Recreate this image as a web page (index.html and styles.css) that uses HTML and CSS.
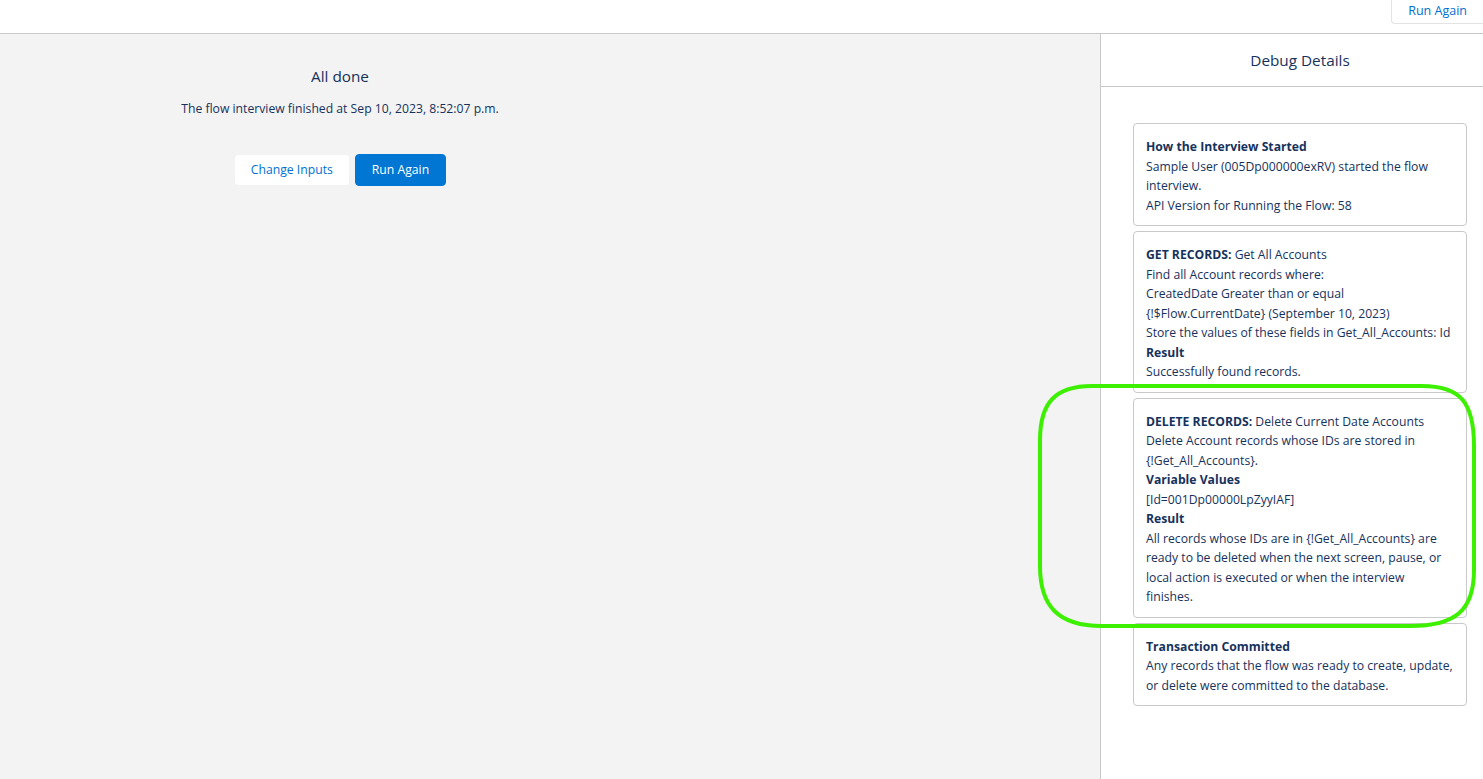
FILE: index.html
```html
<!DOCTYPE html>
<html lang="en">
<head>
<meta charset="utf-8">
<title>Flow Debug</title>
<link rel="stylesheet" href="styles.css">
</head>
<body>
<header class="topbar">
  <button class="top-run">Run Again</button>
</header>
<div class="workspace">
  <main class="main">
    <section class="finish">
      <h1 class="finish-title">All done</h1>
      <p class="finish-text">The flow interview finished at Sep 10, 2023, 8:52:07 p.m.</p>
      <div class="actions">
        <button class="btn btn-neutral">Change Inputs</button>
        <button class="btn btn-brand">Run Again</button>
      </div>
    </section>
  </main>
  <aside class="debug">
    <h2 class="debug-title">Debug Details</h2>
    <div class="debug-list">
      <div class="card">
        <div><b>How the Interview Started</b></div>
        <div>Sample User (005Dp000000exRV) started the flow interview.</div>
        <div>API Version for Running the Flow: 58</div>
      </div>
      <div class="card">
        <div><b>GET RECORDS:</b> Get All Accounts</div>
        <div>Find all Account records where:</div>
        <div>CreatedDate Greater than or equal</div>
        <div>{!$Flow.CurrentDate} (September 10, 2023)</div>
        <div>Store the values of these fields in Get_All_Accounts: Id</div>
        <div><b>Result</b></div>
        <div>Successfully found records.</div>
      </div>
      <div class="card">
        <div><b>DELETE RECORDS:</b> Delete Current Date Accounts</div>
        <div>Delete Account records whose IDs are stored in {!Get_All_Accounts}.</div>
        <div><b>Variable Values</b></div>
        <div>[Id=001Dp00000LpZyyIAF]</div>
        <div><b>Result</b></div>
        <div>All records whose IDs are in {!Get_All_Accounts} are ready to be deleted when the next screen, pause, or local action is executed or when the interview finishes.</div>
      </div>
      <div class="card">
        <div><b>Transaction Committed</b></div>
        <div>Any records that the flow was ready to create, update, or delete were committed to the database.</div>
      </div>
    </div>
  </aside>
</div>
<svg class="mark" width="1483" height="779" viewBox="0 0 1483 779" aria-hidden="true">
  <path d="M1092 386 L1422 386 C1460 386 1474 402 1474 446 L1474 570 C1474 610 1456 626 1410 626 L1102 626 C1058 626 1040 606 1040 566 L1040 440 C1040 402 1056 386 1092 386 Z" fill="none" stroke="#3cf000" stroke-width="4"/>
</svg>
</body>
</html>
```

FILE: styles.css
```css
* { box-sizing: border-box; }

html, body {
  margin: 0;
  height: 100%;
}

body {
  font-family: "Open Sans", "Noto Sans", sans-serif;
  font-size: 12.2px;
  line-height: 1.5;
  color: #16325c;
  background: #ffffff;
  overflow: hidden;
  position: relative;
}

button {
  font-family: inherit;
  cursor: pointer;
}

.topbar {
  height: 34px;
  border-bottom: 1px solid #c9c9c9;
  display: flex;
  justify-content: flex-end;
  align-items: flex-start;
}

/* toolbar button, its top edge tucked under the window edge */
.top-run {
  margin-top: -8px;
  height: 32px;
  padding: 6px 16px 0 16px;
  background: #ffffff;
  border: 1px solid #e3e3e3;
  border-right: none;
  border-radius: 0 0 0 4px;
  color: #0070d2;
  font-size: 12.5px;
  line-height: 20px;
}

.workspace {
  display: flex;
  height: calc(100% - 34px);
}

.main {
  width: 1101px;
  flex: none;
  background: #f3f3f3;
  border-right: 1px solid #c9c9c9;
}

.finish {
  width: 680px;
  padding-top: 30px;
  text-align: center;
}

.finish-title {
  margin: 0;
  font-size: 15.3px;
  font-weight: 400;
  line-height: 24px;
}

.finish-text {
  margin: 11px 0 0;
  line-height: 20px;
}

.actions {
  margin-top: 35px;
  display: flex;
  justify-content: center;
  gap: 5px;
}

.btn {
  height: 32px;
  padding: 0 16px;
  border-radius: 4px;
  font-size: 12.2px;
  line-height: 30px;
}

.btn-neutral {
  background: #ffffff;
  border: 1px solid #f3f3f3;
  color: #0070d2;
}

.btn-brand {
  background: #0176d3;
  border: 1px solid #0176d3;
  color: #ffffff;
}

.debug {
  flex: 1;
  background: #ffffff;
}

.debug-title {
  margin: 0;
  height: 53px;
  padding-left: 16px;
  border-bottom: 1px solid #c9c9c9;
  font-size: 15.3px;
  font-weight: 400;
  line-height: 52px;
  text-align: center;
}

.debug-list {
  padding: 36px 16px 0 32px;
  display: flex;
  flex-direction: column;
  gap: 5px;
}

.card {
  border: 1px solid #c9c9c9;
  border-radius: 4px;
  padding: 13px 13px 10px 12px;
  line-height: 19.5px;
}

.card b {
  font-weight: 700;
}

/* hand-drawn highlight over the debug panel */
.mark {
  position: absolute;
  left: 0;
  top: 0;
  pointer-events: none;
}
```
